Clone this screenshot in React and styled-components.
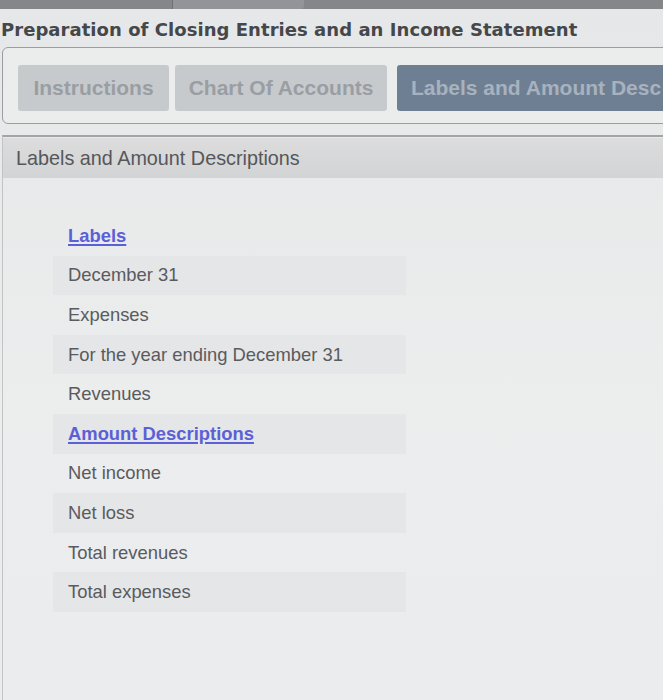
import React from "react";
import styled, { createGlobalStyle } from "styled-components";

const Global = createGlobalStyle`
  html, body { margin: 0; padding: 0; background: #e9eaeb; }
  body { width: 663px; height: 700px; overflow: hidden; }
`;

const Page = styled.div`
  width: 663px;
  height: 700px;
  background: linear-gradient(180deg, #e6e7e8 0%, #eceded 60%, #ebeced 100%);
  overflow: hidden;
  display: flex;
  flex-direction: column;
`;

const TopStrip = styled.div`
  height: 9px;
  flex: 0 0 9px;
  background: #858689;
  display: flex;
`;

const StripSeg = styled.div`
  width: ${(p) => p.w}px;
  background: ${(p) => (p.light ? "#939497" : "#858689")};
  border-left: ${(p) => (p.light ? "1px solid #6f7073" : "none")};
  border-bottom-right-radius: ${(p) => (p.light ? "4px" : "0")};
`;

const Title = styled.h1`
  margin: 9px 0 0 0;
  padding-left: 1px;
  font-family: "DejaVu Sans", Verdana, sans-serif;
  font-weight: bold;
  font-size: 18px;
  line-height: 24px;
  color: #45474a;
  white-space: nowrap;
  letter-spacing: 0.05px;
`;

const TabBox = styled.div`
  margin: 5px -10px 0 2px;
  border: 1.5px solid #9c9da0;
  border-radius: 6px;
  padding: 17px 0 12px 15px;
  display: flex;
  gap: 6px;
  background: #ebecec;
  overflow: hidden;
`;

const Tab = styled.div`
  height: 46px;
  box-sizing: border-box;
  padding: 0 ${(p) => (p.active ? "0" : "14px")} 0 14px;
  display: flex;
  align-items: center;
  justify-content: ${(p) => (p.active ? "flex-start" : "center")};
  border-radius: 3px;
  background: ${(p) => (p.active ? "#6f7f93" : "#c6cacd")};
  color: ${(p) => (p.active ? "#a7b2bf" : "#9a9ea3")};
  font-family: "Liberation Sans", Arial, sans-serif;
  font-weight: bold;
  font-size: 21px;
  white-space: nowrap;
  margin-left: ${(p) => (p.gap ? p.gap : 0)}px;
  flex: ${(p) => (p.active ? "1 0 auto" : "0 0 auto")};
  width: ${(p) => (p.w ? p.w + "px" : "auto")};
`;

const Panel = styled.div`
  flex: 1 1 auto;
  margin: 11px -10px 0 2px;
  border-top: 2px solid #a3a4a6;
  border-left: 1.5px solid #c2c3c5;
`;

const PanelHeader = styled.div`
  margin-top: 1px;
  height: 40px;
  display: flex;
  align-items: center;
  padding-left: 13px;
  background: linear-gradient(180deg, #dcdcdd 0%, #d3d4d5 100%);
  font-family: "Liberation Sans", Arial, sans-serif;
  font-size: 19.8px;
  color: #55575a;
  white-space: nowrap;
`;

const List = styled.div`
  padding: 38px 0 0 50px;
  width: 353px;
`;

const Row = styled.div`
  height: 39.6px;
  display: flex;
  align-items: center;
  padding-left: 15px;
  background: ${(p) => (p.shade ? "#e5e6e7" : "transparent")};
  font-family: "Liberation Sans", Arial, sans-serif;
  font-size: 18.4px;
  color: #595b5e;
  white-space: nowrap;
`;

const HeadLink = styled.span`
  font-weight: bold;
  color: #5b60d6;
  text-decoration: underline;
  text-decoration-thickness: 1.5px;
  text-underline-offset: 2px;
`;

const rows = [
  { t: "Labels", h: true },
  { t: "December 31" },
  { t: "Expenses" },
  { t: "For the year ending December 31" },
  { t: "Revenues" },
  { t: "Amount Descriptions", h: true },
  { t: "Net income" },
  { t: "Net loss" },
  { t: "Total revenues" },
  { t: "Total expenses" },
];

export default function App() {
  return (
    <Page>
      <Global />
      <TopStrip>
        <StripSeg w={172} />
        <StripSeg w={131} light />
        <StripSeg w={360} />
      </TopStrip>
      <Title>Preparation of Closing Entries and an Income Statement</Title>
      <TabBox>
        <Tab w={151}>Instructions</Tab>
        <Tab w={212}>Chart Of Accounts</Tab>
        <Tab active gap={4}>Labels and Amount Desc</Tab>
      </TabBox>
      <Panel>
        <PanelHeader>Labels and Amount Descriptions</PanelHeader>
        <List>
          {rows.map((r, i) => (
            <Row key={i} shade={i % 2 === 1}>
              {r.h ? <HeadLink>{r.t}</HeadLink> : r.t}
            </Row>
          ))}
        </List>
      </Panel>
    </Page>
  );
}
